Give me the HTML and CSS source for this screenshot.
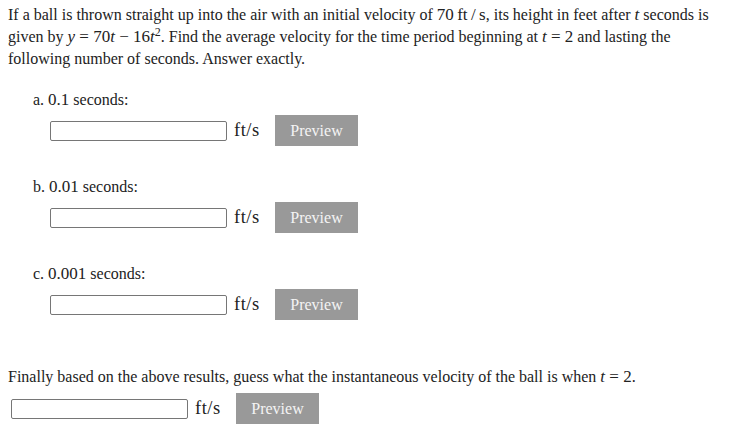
FILE: index.html
```html
<!DOCTYPE html>
<html>
<head>
<meta charset="utf-8">
<link rel="stylesheet" href="styles.css">
</head>
<body>
<div class="page">
  <p class="intro">If a ball is thrown straight up into the air with an initial velocity of <span class="m">70&thinsp;ft&thinsp;/&thinsp;s</span>, its height in feet after <span class="m"><i>t</i></span> seconds is given by <span class="m"><i>y</i> = 70<i>t</i> &minus; 16<i>t</i><sup>2</sup></span>. Find the average velocity for the time period beginning at <span class="m"><i>t</i> = 2</span> and lasting the following number of seconds. Answer exactly.</p>

  <div class="part">
    <div class="label">a. <span class="m">0.1</span> seconds:</div>
    <div class="row">
      <input class="answer" type="text">
      <span class="unit m">ft/s</span>
      <button class="preview">Preview</button>
    </div>
  </div>

  <div class="part">
    <div class="label">b. <span class="m">0.01</span> seconds:</div>
    <div class="row">
      <input class="answer" type="text">
      <span class="unit m">ft/s</span>
      <button class="preview">Preview</button>
    </div>
  </div>

  <div class="part last-part">
    <div class="label">c. <span class="m">0.001</span> seconds:</div>
    <div class="row">
      <input class="answer" type="text">
      <span class="unit m">ft/s</span>
      <button class="preview">Preview</button>
    </div>
  </div>

  <p class="final">Finally based on the above results, guess what the instantaneous velocity of the ball is when <span class="m"><i>t</i> = 2</span>.</p>
  <div class="row final-row">
    <input class="answer" type="text">
    <span class="unit m">ft/s</span>
    <button class="preview">Preview</button>
  </div>
</div>
</body>
</html>
```

FILE: styles.css
```css
html, body {
  margin: 0;
  padding: 0;
  background: #ffffff;
}
body {
  font-family: "Liberation Serif", serif;
  font-size: 16px;
  color: #222222;
}
.page {
  padding: 4px 8px 0 8px;
}
p {
  margin: 0;
  line-height: 22px;
}
.intro {
  margin-bottom: 19px;
}
.m {
  font-family: "Liberation Serif", serif;
  font-size: 17px;
}
.m i {
  font-style: italic;
}
sup {
  font-size: 12px;
  line-height: 1;
  vertical-align: 6px;
}
.part {
  padding-left: 25px;
  margin-bottom: 30px;
}
.last-part {
  margin-bottom: 46px;
}
.label {
  line-height: 22px;
  height: 22px;
}
.row {
  display: flex;
  align-items: center;
  margin-top: 4px;
  height: 31px;
}
.part .row {
  padding-left: 17px;
}
.answer {
  box-sizing: border-box;
  width: 177px;
  height: 20px;
  margin: 0;
  padding: 0 3px;
  border: 1px solid #767676;
  border-radius: 2px;
  background: #ffffff;
  font-family: "Liberation Serif", serif;
}
.unit {
  margin-left: 7px;
  width: 27px;
  font-size: 18.5px;
  letter-spacing: 0.5px;
}
.preview {
  margin-left: 14px;
  width: 83px;
  height: 31px;
  border: none;
  background: #999999;
  color: #f4f4f4;
  font-family: "Liberation Serif", serif;
  font-size: 16px;
  padding: 0;
}
.final-row {
  padding-left: 3px;
  margin-top: 5px;
}
```
